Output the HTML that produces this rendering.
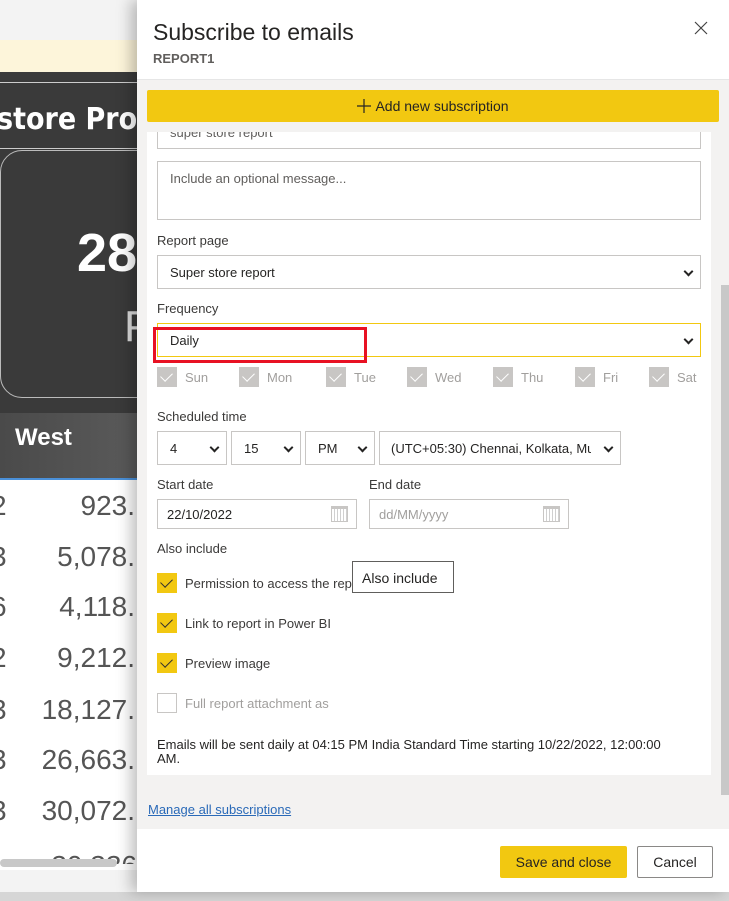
<!DOCTYPE html>
<html><head><meta charset="utf-8"><style>
*{box-sizing:border-box;margin:0;padding:0}
body{width:729px;height:901px;position:relative;overflow:hidden;font-family:"Liberation Sans",sans-serif;background:#fff;color:#252423}
.a{position:absolute}
.lbl{position:absolute;font-size:13px;color:#3b3a39}
.box{position:absolute;border:1px solid #c8c6c4;background:#fff;font-size:13px;color:#252423;padding-left:12px;display:flex;align-items:center}
.chev{position:absolute;right:8px;top:50%;margin-top:-4px;width:7px;height:7px;border-right:2px solid #252423;border-bottom:2px solid #252423;transform:rotate(45deg)}
.dc{position:absolute;width:20px;height:20px;background:#c8c6c4}
.dc:after,.yc:after{content:"";position:absolute;left:6px;top:3px;width:6px;height:10px;border-right:1px solid #fff;border-bottom:1px solid #fff;transform:rotate(45deg)}
.yc{position:absolute;width:20px;height:20px;background:#f2c811}
.yc:after{border-color:#323130}
.dl{position:absolute;font-size:13px;color:#a19f9d}
.num{position:absolute;right:594px;font-size:28px;color:#555;text-align:right}
.cut{position:absolute;left:-9px;font-size:28px;color:#555}
.cal{position:absolute;right:8px;top:6px;width:17px;height:16px;border:1px solid #c8c6c4;border-top:3px solid #c8c6c4;background:repeating-linear-gradient(90deg,#fff 0 2px,#d0d0d0 2px 3px)}
</style></head><body>
<div class="a" style="left:0;top:0;width:137px;height:40px;background:#f3f3f3"></div>
<div class="a" style="left:0;top:40px;width:137px;height:32px;background:#fdf5da"></div>
<div class="a" style="left:0;top:72px;width:137px;height:341px;background:#3a3a3a"></div>
<div class="a" style="left:0;top:82px;width:137px;height:1px;background:#ccc"></div>
<div class="a" style="left:0;top:148px;width:137px;height:1px;background:#ccc"></div>
<div class="a" style="left:-3px;top:102px;font-size:30px;font-weight:bold;color:#fff;font-family:'DejaVu Sans Condensed','DejaVu Sans',sans-serif;white-space:nowrap">store Pro</div>
<div class="a" style="left:0;top:150px;width:160px;height:248px;border:1px solid #bbb;border-radius:22px"></div>
<div class="a" style="left:77px;top:222px;font-size:54px;font-weight:bold;color:#fff">28</div>
<div class="a" style="left:124px;top:302px;font-size:44px;color:#ddd">P</div>
<div class="a" style="left:0;top:413px;width:137px;height:66px;background:linear-gradient(90deg,#4a4a4a,#5a5a5a)"></div>
<div class="a" style="left:0;top:478px;width:137px;height:2px;background:#4a90d9"></div>
<div class="a" style="left:15px;top:424px;font-size:24px;font-weight:bold;color:#fff">West</div>
<div class="num" style="top:490px">923.</div><div class="cut" style="top:490px">2</div>
<div class="num" style="top:541px">5,078.</div><div class="cut" style="top:541px">3</div>
<div class="num" style="top:591px">4,118.</div><div class="cut" style="top:591px">6</div>
<div class="num" style="top:642px">9,212.</div><div class="cut" style="top:642px">2</div>
<div class="num" style="top:694px">18,127.</div><div class="cut" style="top:694px">3</div>
<div class="num" style="top:744px">26,663.</div><div class="cut" style="top:744px">3</div>
<div class="num" style="top:795px">30,072.</div><div class="cut" style="top:795px">3</div>
<div class="a" style="left:0;top:852px;width:137px;height:12px;overflow:hidden"><div class="num" style="top:-2px;right:0;left:40px">30,336</div></div>
<div class="a" style="left:0;top:859px;width:117px;height:8px;background:#c8c8c8;border-radius:4px"></div>
<div class="a" style="left:0;top:870px;width:137px;height:22px;background:#f3f3f3"></div>
<div class="a" style="left:0;top:892px;width:729px;height:9px;background:#d6d6d6"></div>
<div class="a" style="left:137px;top:0;width:592px;height:892px;background:#fff;box-shadow:-6px 0 14px rgba(0,0,0,.25)"></div>
<div class="a" style="left:153px;top:19px;font-size:23px;color:#252423">Subscribe to emails</div>
<div class="a" style="left:153px;top:51px;font-size:13px;font-weight:bold;color:#605e5c">REPORT1</div>
<svg class="a" style="left:694px;top:21px" width="14" height="14"><path d="M1 1L13 13M13 1L1 13" stroke="#444" stroke-width="1.2"/></svg>
<div class="a" style="left:137px;top:79px;width:592px;height:750px;background:#f3f2f1;border-top:1px solid #e6e6e6"></div>
<div class="a" style="left:721px;top:285px;width:8px;height:510px;background:#c8c8c8"></div>
<div class="a" style="left:147px;top:90px;width:572px;height:32px;background:#f2c811;border-radius:2px;font-size:14px;display:flex;align-items:center;justify-content:center;color:#252423"><svg width="14" height="14" style="margin-right:4px"><path d="M7 0V14M0 7H14" stroke="#252423" stroke-width="1.2"/></svg>Add new subscription</div>
<div class="a" style="left:147px;top:132px;width:564px;height:643px;background:#fff;overflow:hidden">
 <div class="box" style="left:10px;top:-20px;width:544px;height:37px;align-items:flex-end;padding-bottom:8px;color:#605e5c">super store report</div>
</div>
<div class="box" style="left:157px;top:161px;width:544px;height:59px;align-items:flex-start;padding-top:9px;color:#605e5c">Include an optional message...</div>
<div class="lbl" style="left:157px;top:233px">Report page</div>
<div class="box" style="left:157px;top:255px;width:544px;height:34px">Super store report<i class="chev"></i></div>
<div class="lbl" style="left:157px;top:301px">Frequency</div>
<div class="box" style="left:157px;top:323px;width:544px;height:34px;border-color:#f2c811">Daily<i class="chev"></i></div>
<div class="a" style="left:153px;top:327px;width:214px;height:36px;border:3px solid #e81123"></div>
<div class="dc" style="left:157px;top:367px"></div><div class="dl" style="left:185px;top:370px">Sun</div>
<div class="dc" style="left:239px;top:367px"></div><div class="dl" style="left:267px;top:370px">Mon</div>
<div class="dc" style="left:326px;top:367px"></div><div class="dl" style="left:354px;top:370px">Tue</div>
<div class="dc" style="left:407px;top:367px"></div><div class="dl" style="left:435px;top:370px">Wed</div>
<div class="dc" style="left:493px;top:367px"></div><div class="dl" style="left:521px;top:370px">Thu</div>
<div class="dc" style="left:575px;top:367px"></div><div class="dl" style="left:603px;top:370px">Fri</div>
<div class="dc" style="left:649px;top:367px"></div><div class="dl" style="left:677px;top:370px">Sat</div>
<div class="lbl" style="left:157px;top:409px">Scheduled time</div>
<div class="box" style="left:157px;top:431px;width:70px;height:34px">4<i class="chev"></i></div>
<div class="box" style="left:231px;top:431px;width:70px;height:34px">15<i class="chev"></i></div>
<div class="box" style="left:305px;top:431px;width:70px;height:34px">PM<i class="chev"></i></div>
<div class="box" style="left:379px;top:431px;width:242px;height:34px;padding-left:11px;white-space:nowrap;overflow:hidden"><span style="width:200px;overflow:hidden;display:inline-block">(UTC+05:30) Chennai, Kolkata, Mumbai</span><i class="chev"></i></div>
<div class="lbl" style="left:157px;top:477px">Start date</div>
<div class="box" style="left:157px;top:499px;width:200px;height:30px;padding-left:9px">22/10/2022<i class="cal"></i></div>
<div class="lbl" style="left:369px;top:477px">End date</div>
<div class="box" style="left:369px;top:499px;width:200px;height:30px;padding-left:9px;color:#a19f9d">dd/MM/yyyy<i class="cal"></i></div>
<div class="lbl" style="left:157px;top:541px">Also include</div>
<div class="yc" style="left:157px;top:573px"></div><div class="lbl" style="left:185px;top:576px;width:167px;overflow:hidden;white-space:nowrap">Permission to access the report</div>
<div class="a" style="left:352px;top:561px;width:102px;height:32px;border:1px solid #605e5c;background:#fff;font-size:14px;padding:8px 0 0 9px">Also include</div>
<div class="yc" style="left:157px;top:613px"></div><div class="lbl" style="left:185px;top:616px">Link to report in Power BI</div>
<div class="yc" style="left:157px;top:653px"></div><div class="lbl" style="left:185px;top:656px">Preview image</div>
<div class="a" style="left:157px;top:693px;width:20px;height:20px;border:1px solid #c8c6c4"></div><div class="dl" style="left:185px;top:696px">Full report attachment as</div>
<div class="a" style="left:157px;top:738px;font-size:13px;line-height:14px;width:550px;color:#252423">Emails will be sent daily at 04:15 PM India Standard Time starting 10/22/2022, 12:00:00<br>AM.</div>
<div class="a" style="left:148px;top:802px;font-size:13px;color:#2a6ab8;text-decoration:underline">Manage all subscriptions</div>
<div class="a" style="left:500px;top:846px;width:127px;height:32px;background:#f2c811;border-radius:2px;font-size:14px;display:flex;align-items:center;justify-content:center">Save and close</div>
<div class="a" style="left:637px;top:846px;width:76px;height:32px;border:1px solid #8a8886;border-radius:2px;font-size:14px;display:flex;align-items:center;justify-content:center">Cancel</div>
</body></html>
